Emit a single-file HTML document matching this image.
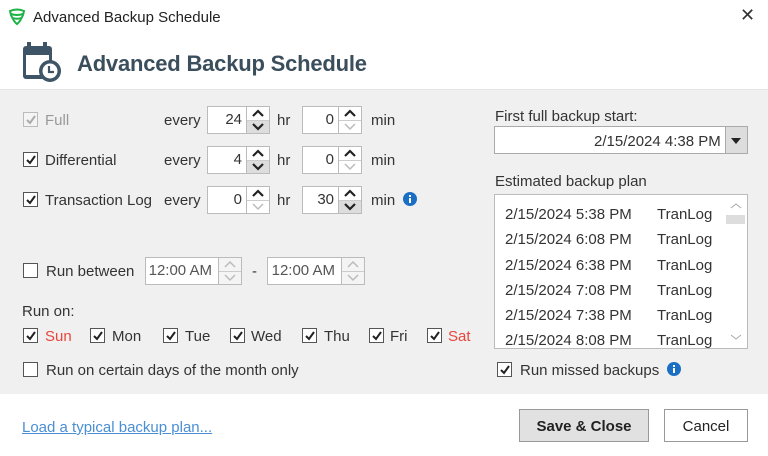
<!DOCTYPE html>
<html><head><style>
*{box-sizing:border-box}
body{margin:0;width:768px;height:456px;background:#fff;font-family:"Liberation Sans",sans-serif;color:#333;position:relative;overflow:hidden;font-size:15px}
.a{position:absolute;white-space:nowrap}
.body{position:absolute;left:0;top:89px;width:768px;height:305px;background:#f0f0f0;border-top:1px solid #e4e4e4}
.cb{position:absolute;width:15px;height:15px;border:1px solid #555;background:#fff}
.cb.dis{border-color:#bbb;background:#f4f4f4}
.cb svg{position:absolute;left:1px;top:1px}
.box{position:absolute;background:#fff;border:1px solid #bbb;height:28px;text-align:right;padding-right:27px;line-height:26px;font-size:15px}
.sp{position:absolute;right:0;top:0;width:23px;height:26px;border-left:1px solid #bbb}
.sp div{height:13px;position:relative}
.sp .dn{border-top:1px solid #ccc}
.sp svg{position:absolute;left:0;top:0}
</style></head><body>
<svg class="a" style="left:8px;top:8px" width="18" height="18" viewBox="0 0 18 18"><path d="M2 3 Q9 0 16 3 L15 7 Q12 14 9 16 Q6 14 3 7 Z" fill="none" stroke="#1eb346" stroke-width="2"/><path d="M3 6 Q9 8 15 6 M5 10 Q9 11.5 13 10" stroke="#1eb346" stroke-width="2" fill="none"/></svg>
<div class="a" style="left:33px;top:9px;font-size:15px;color:#222">Advanced Backup Schedule</div>
<div class="a" style="left:740px;top:5px;font-size:18px;color:#333">✕</div>
<svg class="a" style="left:22px;top:41px" width="40" height="42" viewBox="0 0 40 42"><rect x="1" y="5" width="29" height="33" rx="3" fill="#3d5566"/><rect x="4" y="14" width="23" height="20" fill="#fff"/><rect x="5" y="1" width="4" height="8" fill="#3d5566"/><rect x="21" y="1" width="4" height="8" fill="#3d5566"/><circle cx="28" cy="30" r="11" fill="#3d5566"/><circle cx="28" cy="30" r="7.5" fill="#fff"/><path d="M27 25v6h5" stroke="#3d5566" stroke-width="2.2" fill="none"/></svg>
<div class="a" style="left:77px;top:51px;font-size:22px;color:#3a4e5c;font-weight:bold;letter-spacing:-0.2px">Advanced Backup Schedule</div>
<div class="body"></div>

<div class="cb dis" style="left:23px;top:112px"><svg width="12" height="12"><path d="M2 6l3 3 5-7" stroke="#aaa" stroke-width="2" fill="none"/></svg></div>
<div class="a" style="left:45px;top:112px;color:#999">Full</div>
<div class="cb" style="left:23px;top:152px"><svg width="12" height="12"><path d="M2 6l3 3 5-7" stroke="#222" stroke-width="2" fill="none"/></svg></div>
<div class="a" style="left:45px;top:152px">Differential</div>
<div class="cb" style="left:23px;top:192px"><svg width="12" height="12"><path d="M2 6l3 3 5-7" stroke="#222" stroke-width="2" fill="none"/></svg></div>
<div class="a" style="left:45px;top:192px">Transaction Log</div>

<div class="a" style="left:164px;top:112px">every</div>
<div class="a" style="left:164px;top:152px">every</div>
<div class="a" style="left:164px;top:192px">every</div>
<div class="a" style="left:277px;top:112px">hr</div>
<div class="a" style="left:277px;top:152px">hr</div>
<div class="a" style="left:277px;top:192px">hr</div>
<div class="a" style="left:371px;top:112px">min</div>
<div class="a" style="left:371px;top:152px">min</div>
<div class="a" style="left:371px;top:192px">min</div>
<svg class="a" style="left:403px;top:192px" width="14" height="14"><circle cx="7" cy="7" r="7" fill="#1a6fc4"/><rect x="6" y="6" width="2" height="5" fill="#fff"/><rect x="6" y="3" width="2" height="2" fill="#fff"/></svg>

<div class="box" style="left:207px;top:106px;width:63px">24<div class="sp"><div><svg width="22" height="13"><path d="M6 9L11 4L16 9" stroke="#222" stroke-width="2.2" fill="none"/></svg></div><div class="dn" style="background:#ddd"><svg width="22" height="13"><path d="M6 3L11 8L16 3" stroke="#222" stroke-width="2.2" fill="none"/></svg></div></div></div>
<div class="box" style="left:302px;top:106px;width:60px">0<div class="sp"><div><svg width="22" height="13"><path d="M6 9L11 4L16 9" stroke="#222" stroke-width="2.2" fill="none"/></svg></div><div class="dn"><svg width="22" height="13"><path d="M6 3L11 8L16 3" stroke="#bbb" stroke-width="1.5" fill="none"/></svg></div></div></div>
<div class="box" style="left:207px;top:146px;width:63px">4<div class="sp"><div><svg width="22" height="13"><path d="M6 9L11 4L16 9" stroke="#222" stroke-width="2.2" fill="none"/></svg></div><div class="dn" style="background:#ddd"><svg width="22" height="13"><path d="M6 3L11 8L16 3" stroke="#222" stroke-width="2.2" fill="none"/></svg></div></div></div>
<div class="box" style="left:302px;top:146px;width:60px">0<div class="sp"><div><svg width="22" height="13"><path d="M6 9L11 4L16 9" stroke="#222" stroke-width="2.2" fill="none"/></svg></div><div class="dn"><svg width="22" height="13"><path d="M6 3L11 8L16 3" stroke="#bbb" stroke-width="1.5" fill="none"/></svg></div></div></div>
<div class="box" style="left:207px;top:186px;width:63px">0<div class="sp"><div><svg width="22" height="13"><path d="M6 9L11 4L16 9" stroke="#222" stroke-width="2.2" fill="none"/></svg></div><div class="dn"><svg width="22" height="13"><path d="M6 3L11 8L16 3" stroke="#bbb" stroke-width="1.5" fill="none"/></svg></div></div></div>
<div class="box" style="left:302px;top:186px;width:60px">30<div class="sp"><div><svg width="22" height="13"><path d="M6 9L11 4L16 9" stroke="#222" stroke-width="2.2" fill="none"/></svg></div><div class="dn" style="background:#ddd"><svg width="22" height="13"><path d="M6 3L11 8L16 3" stroke="#222" stroke-width="2.2" fill="none"/></svg></div></div></div>

<div class="cb" style="left:23px;top:263px"></div>
<div class="a" style="left:46px;top:263px">Run between</div>
<div class="box" style="left:145px;top:257px;width:97px;color:#555;padding-right:29px">12:00 AM<div class="sp" style="background:#f4f4f4"><div><svg width="22" height="13"><path d="M6 9L11 4L16 9" stroke="#bbb" stroke-width="1.5" fill="none"/></svg></div><div class="dn"><svg width="22" height="13"><path d="M6 3L11 8L16 3" stroke="#bbb" stroke-width="1.5" fill="none"/></svg></div></div></div>
<div class="a" style="left:252px;top:263px">-</div>
<div class="box" style="left:267px;top:257px;width:98px;color:#555;padding-right:29px">12:00 AM<div class="sp" style="background:#f4f4f4"><div><svg width="22" height="13"><path d="M6 9L11 4L16 9" stroke="#bbb" stroke-width="1.5" fill="none"/></svg></div><div class="dn"><svg width="22" height="13"><path d="M6 3L11 8L16 3" stroke="#bbb" stroke-width="1.5" fill="none"/></svg></div></div></div>

<div class="a" style="left:22px;top:303px">Run on:</div>
<div class="cb" style="left:23px;top:328px"><svg width="12" height="12"><path d="M2 6l3 3 5-7" stroke="#222" stroke-width="2" fill="none"/></svg></div>
<div class="a" style="left:45px;top:328px;color:#e8463c">Sun</div>
<div class="cb" style="left:90px;top:328px"><svg width="12" height="12"><path d="M2 6l3 3 5-7" stroke="#222" stroke-width="2" fill="none"/></svg></div>
<div class="a" style="left:112px;top:328px">Mon</div>
<div class="cb" style="left:163px;top:328px"><svg width="12" height="12"><path d="M2 6l3 3 5-7" stroke="#222" stroke-width="2" fill="none"/></svg></div>
<div class="a" style="left:185px;top:328px">Tue</div>
<div class="cb" style="left:230px;top:328px"><svg width="12" height="12"><path d="M2 6l3 3 5-7" stroke="#222" stroke-width="2" fill="none"/></svg></div>
<div class="a" style="left:251px;top:328px">Wed</div>
<div class="cb" style="left:302px;top:328px"><svg width="12" height="12"><path d="M2 6l3 3 5-7" stroke="#222" stroke-width="2" fill="none"/></svg></div>
<div class="a" style="left:324px;top:328px">Thu</div>
<div class="cb" style="left:369px;top:328px"><svg width="12" height="12"><path d="M2 6l3 3 5-7" stroke="#222" stroke-width="2" fill="none"/></svg></div>
<div class="a" style="left:390px;top:328px">Fri</div>
<div class="cb" style="left:427px;top:328px"><svg width="12" height="12"><path d="M2 6l3 3 5-7" stroke="#222" stroke-width="2" fill="none"/></svg></div>
<div class="a" style="left:448px;top:328px;color:#e8463c">Sat</div>
<div class="cb" style="left:23px;top:362px"></div>
<div class="a" style="left:46px;top:362px">Run on certain days of the month only</div>

<div class="a" style="left:495px;top:108px">First full backup start:</div>
<div class="a" style="left:494px;top:126px;width:254px;height:28px;background:#fff;border:1px solid #aaa"></div>
<div class="a" style="left:594px;top:133px">2/15/2024 4:38 PM</div>
<div class="a" style="left:725px;top:126px;width:23px;height:28px;background:#ddd;border:1px solid #aaa"></div>
<svg class="a" style="left:731px;top:138px" width="10" height="6"><path d="M0 0h10L5 6z" fill="#222"/></svg>
<div class="a" style="left:495px;top:173px">Estimated backup plan</div>
<div class="a" style="left:494px;top:194px;width:254px;height:155px;background:#fff;border:1px solid #bbb"></div>
<div class="a" style="left:726px;top:215px;width:19px;height:9px;background:#ddd"></div>
<svg class="a" style="left:730px;top:202px" width="12" height="8"><path d="M1 6L6 2L11 6" stroke="#aaa" fill="none"/></svg>
<svg class="a" style="left:730px;top:333px" width="12" height="8"><path d="M1 2L6 6L11 2" stroke="#aaa" fill="none"/></svg>
<div class="a" style="left:505px;top:202px;line-height:25.3px">2/15/2024 5:38 PM<br>2/15/2024 6:08 PM<br>2/15/2024 6:38 PM<br>2/15/2024 7:08 PM<br>2/15/2024 7:38 PM<br>2/15/2024 8:08 PM</div>
<div class="a" style="left:657px;top:202px;line-height:25.3px">TranLog<br>TranLog<br>TranLog<br>TranLog<br>TranLog<br>TranLog</div>
<div class="cb" style="left:497px;top:362px"><svg width="12" height="12"><path d="M2 6l3 3 5-7" stroke="#222" stroke-width="2" fill="none"/></svg></div>
<div class="a" style="left:520px;top:362px">Run missed backups</div>
<svg class="a" style="left:667px;top:362px" width="14" height="14"><circle cx="7" cy="7" r="7" fill="#1a6fc4"/><rect x="6" y="6" width="2" height="5" fill="#fff"/><rect x="6" y="3" width="2" height="2" fill="#fff"/></svg>

<div class="a" style="left:22px;top:419px;color:#4a8fd4;text-decoration:underline">Load a typical backup plan...</div>
<div class="a" style="left:519px;top:409px;width:130px;height:33px;background:#e1e1e1;border:1px solid #999;text-align:center;line-height:33px;font-weight:bold;color:#222">Save &amp; Close</div>
<div class="a" style="left:664px;top:409px;width:84px;height:33px;background:#fff;border:1px solid #999;text-align:center;line-height:33px;color:#222">Cancel</div>
</body></html>
